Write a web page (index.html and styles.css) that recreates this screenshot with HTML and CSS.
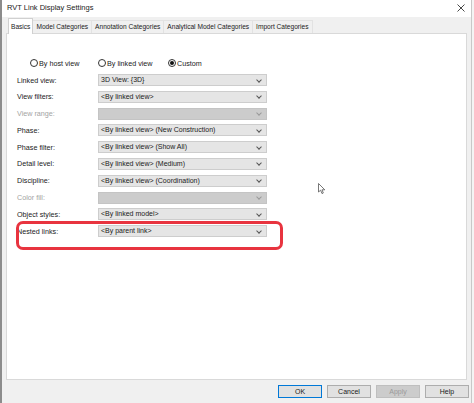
FILE: index.html
```html
<!DOCTYPE html>
<html lang="en">
<head>
  <meta charset="UTF-8">
  <title>RVT Link Display Settings</title>
  <link rel="stylesheet" href="styles.css">
</head>
<body>
  <div class="window">
    <!-- title bar -->
    <div class="titlebar">
      <span class="title">RVT Link Display Settings</span>
      <svg class="close" width="8" height="8" viewBox="0 0 8 8"><path d="M0.5 0.5 L7.5 7.5 M7.5 0.5 L0.5 7.5" stroke="#333" stroke-width="0.9" fill="none"/></svg>
    </div>

    <!-- tabs -->
    <div class="tabs">
      <div class="tab active">Basics</div>
      <div class="tab">Model Categories</div>
      <div class="tab">Annotation Categories</div>
      <div class="tab">Analytical Model Categories</div>
      <div class="tab">Import Categories</div>
    </div>

    <div class="page">
      <div class="radios">
        <label class="radio r1"><span class="dot"></span>By host view</label>
        <label class="radio r2"><span class="dot"></span>By linked view</label>
        <label class="radio"><span class="dot checked"></span>Custom</label>
      </div>

      <div class="form">
        <div class="label">Linked view:</div>
        <div class="combo">3D View: {3D}</div>

        <div class="label">View filters:</div>
        <div class="combo">&lt;By linked view&gt;</div>

        <div class="label disabled">View range:</div>
        <div class="combo off"></div>

        <div class="label">Phase:</div>
        <div class="combo">&lt;By linked view&gt; (New Construction)</div>

        <div class="label">Phase filter:</div>
        <div class="combo">&lt;By linked view&gt; (Show All)</div>

        <div class="label">Detail level:</div>
        <div class="combo">&lt;By linked view&gt; (Medium)</div>

        <div class="label">Discipline:</div>
        <div class="combo">&lt;By linked view&gt; (Coordination)</div>

        <div class="label disabled">Color fill:</div>
        <div class="combo off"></div>

        <div class="label">Object styles:</div>
        <div class="combo">&lt;By linked model&gt;</div>

        <div class="label">Nested links:</div>
        <div class="combo">&lt;By parent link&gt;</div>
      </div>

      <!-- red annotation box around nested links -->
      <div class="highlight"></div>

      <!-- mouse pointer -->
      <svg class="cursor" width="8" height="12" viewBox="0 0 8 12"><path d="M0.5 0.5 L0.5 9 L2.6 7.2 L4 10.6 L5.3 10 L4 6.8 L6.8 6.8 Z" fill="#fff" stroke="#555" stroke-width="0.8" stroke-linejoin="round"/></svg>
    </div>

    <div class="footer">
      <button class="btn default">OK</button>
      <button class="btn">Cancel</button>
      <button class="btn" disabled>Apply</button>
      <button class="btn">Help</button>
    </div>
  </div>
</body>
</html>
```

FILE: styles.css
```css
body {
  margin: 0;
  width: 474px;
  height: 403px;
  overflow: hidden;
  background-color: #f4f4f4;
  font-family: "Segoe UI", "Liberation Sans", Arial, sans-serif;
  font-size: 7.2px;
  color: #1a1a1a;
}
.window {
  width: 469px;
  height: 403px;
  display: flex;
  flex-direction: column;
  background-color: #f0f0f0;
  border-left: 2px solid #8c8c8c;
  border-right: 1px solid #c8c8c8;
}
.titlebar {
  height: 17px;
  flex: none;
  display: flex;
  align-items: center;
  justify-content: space-between;
  padding: 0 6px 2px 5px;
  box-sizing: border-box;
  background-color: #ffffff;
}
.title {
  font-size: 7.5px;
  color: #222;
}
.close {
  display: block;
  margin-top: 1px;
}
.tabs {
  height: 16px;
  flex: none;
  display: flex;
  align-items: flex-end;
  padding-left: 6px;
  position: relative;
  z-index: 1;
}
.tab {
  height: 13px;
  line-height: 12px;
  padding: 0 3px;
  box-sizing: border-box;
  border: 1px solid #e2e2e2;
  border-bottom: none;
  border-left: none;
  background-color: #f0f0f0;
  font-size: 6.6px;
  white-space: nowrap;
}
.tab.active {
  height: 16px;
  line-height: 15px;
  padding: 0 2px;
  margin-bottom: -1px;
  background-color: #ffffff;
  border: 1px solid #d0d0d0;
  border-bottom: none;
}
.page {
  flex: 1;
  margin: 0 4px;
  border: 1px solid #d9d9d9;
  background-color: #ffffff;
  padding: 24px 0 0 10px;
  position: relative;
}
.radios {
  display: flex;
  align-items: center;
  height: 10px;
  padding-left: 13px;
  margin-bottom: 6px;
}
.radio {
  display: flex;
  align-items: center;
  gap: 1px;
  white-space: nowrap;
}
.r1 { width: 68px; }
.r2 { width: 70px; }
.dot {
  width: 8px;
  height: 8px;
  box-sizing: border-box;
  border: 1px solid #333;
  border-radius: 50%;
  background-color: #fff;
  display: flex;
  align-items: center;
  justify-content: center;
}
.dot.checked::after {
  content: "";
  width: 4px;
  height: 4px;
  border-radius: 50%;
  background-color: #111;
}
.form {
  display: grid;
  grid-template-columns: 81px 169px;
  grid-auto-rows: 12px;
  row-gap: 4.8px;
  align-items: center;
  margin-top: 1px;
}
.label {
  white-space: nowrap;
}
.label.disabled {
  color: #a3a3a3;
}
.combo {
  height: 12px;
  line-height: 10px;
  box-sizing: border-box;
  border: 1px solid #cdcdcd;
  background-color: #e5e5e5;
  padding-left: 2px;
  position: relative;
  white-space: nowrap;
  font-size: 7px;
}
.combo::after {
  content: "";
  position: absolute;
  right: 5px;
  top: 2.5px;
  width: 3px;
  height: 3px;
  border-right: 1px solid #555;
  border-bottom: 1px solid #555;
  transform: rotate(45deg);
}
.combo.off {
  background-color: #cccccc;
  border-color: #c4c4c4;
}
.combo.off::after {
  border-color: #9a9a9a;
}
.highlight {
  position: absolute;
  left: 9px;
  top: 187px;
  width: 267px;
  height: 29px;
  box-sizing: border-box;
  border: 3px solid #e8343f;
  border-radius: 7px;
}
.cursor {
  position: absolute;
  left: 311px;
  top: 149px;
}
.footer {
  height: 23px;
  flex: none;
  display: flex;
  justify-content: flex-end;
  align-items: flex-start;
  gap: 5px;
  padding: 5px 2px 0 0;
  box-sizing: border-box;
}
.btn {
  width: 44px;
  height: 13px;
  padding: 0;
  border: 1px solid #adadad;
  background-color: #e1e1e1;
  font-family: inherit;
  font-size: 7px;
  color: #1a1a1a;
}
.btn.default {
  border-color: #0078d7;
}
.btn:disabled {
  background-color: #cccccc;
  border-color: #bfbfbf;
  color: #9a9a9a;
}
```
